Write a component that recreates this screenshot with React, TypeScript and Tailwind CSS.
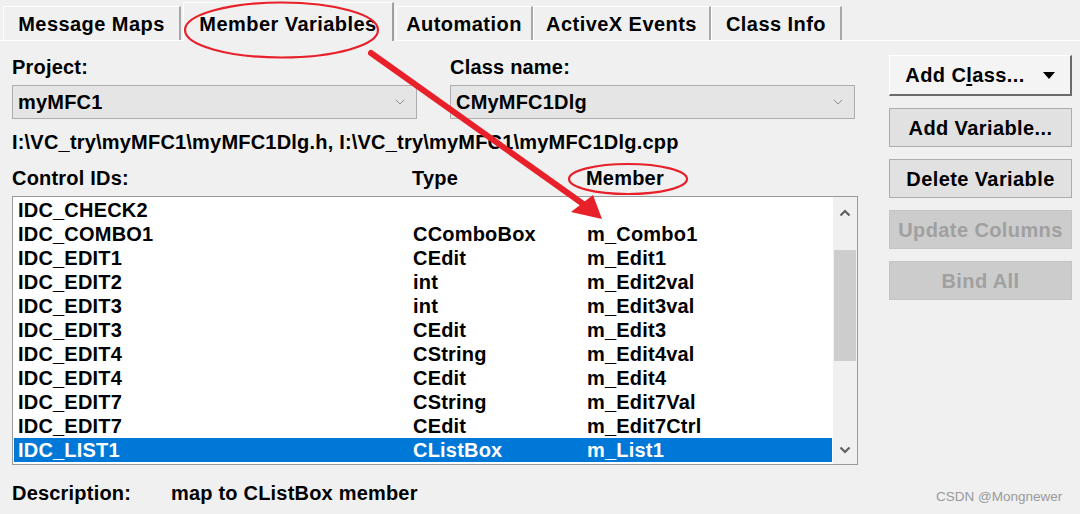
import { ChevronDown } from "lucide-react";

const tabs = [
  { label: "Message Maps", w: "w-[178px]" },
  { label: "Member Variables", w: "w-[211px]", active: true },
  { label: "Automation", w: "w-[137px]" },
  { label: "ActiveX Events", w: "w-[178px]" },
  { label: "Class Info", w: "w-[131px]" },
];

const rows = [
  ["IDC_CHECK2", "", ""],
  ["IDC_COMBO1", "CComboBox", "m_Combo1"],
  ["IDC_EDIT1", "CEdit", "m_Edit1"],
  ["IDC_EDIT2", "int", "m_Edit2val"],
  ["IDC_EDIT3", "int", "m_Edit3val"],
  ["IDC_EDIT3", "CEdit", "m_Edit3"],
  ["IDC_EDIT4", "CString", "m_Edit4val"],
  ["IDC_EDIT4", "CEdit", "m_Edit4"],
  ["IDC_EDIT7", "CString", "m_Edit7Val"],
  ["IDC_EDIT7", "CEdit", "m_Edit7Ctrl"],
  ["IDC_LIST1", "CListBox", "m_List1"],
];

const Combo = ({ value, w }: { value: string; w: string }) => (
  <div className={`${w} h-[34px] flex items-center justify-between bg-[#e5e5e5] border border-[#adadad] pl-[5px] pr-[8px]`}>
    <span>{value}</span>
    <ChevronDown size={16} strokeWidth={1.2} className="text-[#7a7a7a]" />
  </div>
);

const Btn = ({ label, disabled }: { label: string; disabled?: boolean }) => (
  <div
    className={`h-[39px] flex items-center justify-center border tracking-[0.4px] ${
      disabled ? "bg-[#cccccc] border-[#c4c4c4] text-[#a0a0a0]" : "bg-[#e1e1e1] border-[#adadad]"
    }`}
  >
    {label}
  </div>
);

const App = () => {
  return (
    <div className="relative w-[1080px] h-[514px] overflow-hidden bg-[#f0f0f0] text-black font-bold text-[20px] leading-[20px] tracking-[0.2px] font-['Liberation_Sans',Arial,sans-serif]">
      {/* tab strip */}
      <div className="flex items-end h-[41px] pl-[3px] border-b border-white tracking-[0.45px]">
        {tabs.map((t) =>
          t.active ? (
            <div
              key={t.label}
              className={`${t.w} h-[39px] -mb-px mx-[2px] flex items-center justify-center bg-[#f0f0f0] border-l border-t border-white border-r-2 border-r-[#a0a0a0] pt-[3px]`}
            >
              {t.label}
            </div>
          ) : (
            <div
              key={t.label}
              className={`${t.w} h-[34px] flex items-center justify-center border-l border-t border-white border-r-2 border-r-[#a8a8a8]`}
            >
              {t.label}
            </div>
          )
        )}
      </div>

      <div className="flex">
        {/* left side */}
        <div className="ml-[12px] w-[846px] flex flex-col">
          <div className="flex mt-[16px]">
            <div className="w-[438px]">Project:</div>
            <div>Class name:</div>
          </div>
          <div className="flex mt-[8px]">
            <Combo value="myMFC1" w="w-[405px]" />
            <div className="w-[33px]" />
            <Combo value="CMyMFC1Dlg" w="w-[405px]" />
          </div>
          <div className="mt-[13px]">I:\VC_try\myMFC1\myMFC1Dlg.h, I:\VC_try\myMFC1\myMFC1Dlg.cpp</div>
          <div className="flex mt-[16px]">
            <div className="w-[400px]">Control IDs:</div>
            <div className="w-[174px]">Type</div>
            <div>Member</div>
          </div>
          <div className="mt-[8px] h-[269px] flex bg-white border border-[#9a9a9a]">
            <div className="flex-1 pt-[1px]">
              {rows.map((r, i) => {
                const sel = i === rows.length - 1;
                return (
                  <div
                    key={i}
                    className={`flex h-[24px] items-center mx-[1px] pl-[4px] ${sel ? "bg-[#0078d7] text-white" : ""}`}
                  >
                    <div className="w-[395px]">{r[0]}</div>
                    <div className="w-[174px]">{r[1]}</div>
                    <div>{r[2]}</div>
                  </div>
                );
              })}
            </div>
            <div className="w-[24px] bg-[#f0f0f0] flex flex-col items-center">
              <svg width="12" height="8" viewBox="0 0 12 8" className="mt-[12px]">
                <polyline points="1.5,6.5 6,2 10.5,6.5" fill="none" stroke="#606060" strokeWidth="2.2" />
              </svg>
              <div className="w-[22px] h-[111px] bg-[#cdcdcd] mt-[33px]" />
              <div className="flex-1" />
              <svg width="12" height="8" viewBox="0 0 12 8" className="mb-[10px]">
                <polyline points="1.5,1.5 6,6 10.5,1.5" fill="none" stroke="#606060" strokeWidth="2.2" />
              </svg>
            </div>
          </div>
          <div className="flex mt-[18px]">
            <div className="w-[159px]">Description:</div>
            <div>map to CListBox member</div>
          </div>
        </div>

        {/* right buttons */}
        <div className="ml-[31px] w-[183px] flex flex-col gap-[12px] mt-[14px]">
          <div className="h-[41px] flex items-center justify-center gap-[18px] tracking-[0.4px] bg-[#f4f4f4] border-l border-t border-white border-r-2 border-b-2 border-r-[#6a6a6a] border-b-[#6a6a6a]">
            <span>
              Add C<span className="underline underline-offset-2">l</span>ass...
            </span>
            <svg width="12" height="7" viewBox="0 0 12 7">
              <polygon points="0,0 12,0 6,7" fill="#000" />
            </svg>
          </div>
          <Btn label="Add Variable..." />
          <Btn label="Delete Variable" />
          <Btn label="Update Columns" disabled />
          <Btn label="Bind All" disabled />
        </div>
      </div>

      {/* watermark */}
      <div className="absolute left-[936px] top-[488px] text-[13.5px] leading-[18px] font-normal tracking-normal text-[#9a9a9a]">
        CSDN @Mongnewer
      </div>

      {/* red annotations */}
      <svg className="absolute inset-0 pointer-events-none" width="1080" height="514" viewBox="0 0 1080 514">
        <ellipse cx="281.5" cy="30" rx="96.5" ry="27.5" fill="none" stroke="#e8202a" strokeWidth="2.2" />
        <ellipse cx="628" cy="179" rx="59" ry="15" fill="none" stroke="#e8202a" strokeWidth="2.2" />
        <line x1="371" y1="53" x2="586" y2="206" stroke="#e8202a" strokeWidth="6" strokeLinecap="round" />
        <polygon points="602,219 571,212 593,195" fill="#e8202a" />
      </svg>
    </div>
  );
};

export default App;
